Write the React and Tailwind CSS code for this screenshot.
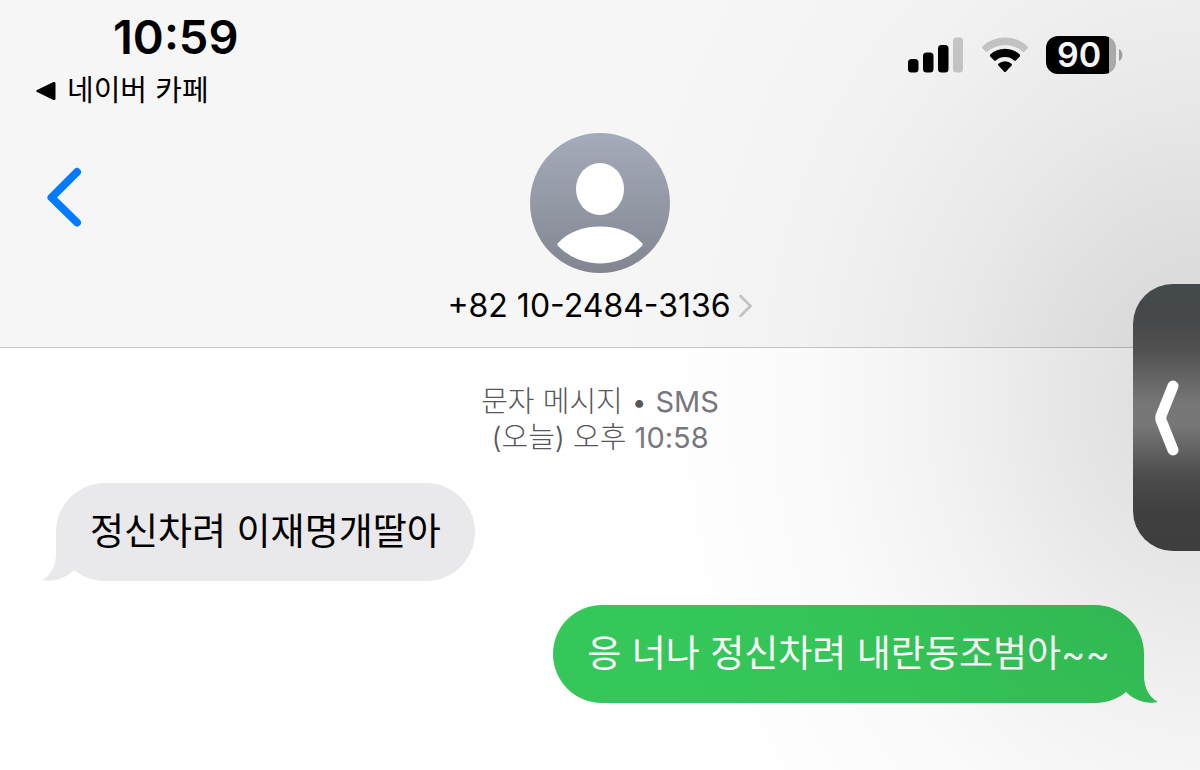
import { useId } from 'react';

const messages = [
  { id: 1, mine: false, text: '정신차려 이재명개딸아' },
  { id: 2, mine: true, text: '응 너나 정신차려 내란동조범아~~' }
];

const SignalIcon = () => (
  <svg width="56" height="36" viewBox="0 0 56 36" aria-hidden="true">
    <rect x="0" y="22" width="10.5" height="13.5" rx="3.5" />
    <rect x="15" y="15.5" width="10.5" height="20" rx="3.5" />
    <rect x="30" y="8" width="10.5" height="27.5" rx="3.5" />
    <rect x="45" y="0.5" width="10" height="35" rx="3.5" fill="#c8c8c8" />
  </svg>
);

const WifiIcon = () => (
  <svg width="48" height="36" viewBox="0 0 48 36" aria-hidden="true">
    <path
      d="M1.4 9.4 A33 33 0 0 1 46.6 9.4 Q47.2 10.4 46.6 11.2 L43 14.8 Q42.2 15.3 41.4 14.6 A26 26 0 0 0 6.6 14.6 Q5.8 15.3 5 14.8 L1.4 11.2 Q0.8 10.4 1.4 9.4 Z"
      fill="#c8c8c8"
    />
    <path d="M9.2 17.6 A21.5 21.5 0 0 1 38.8 17.6 Q39.5 18.6 38.8 19.6 L34.8 23.6 Q34 24.2 33.2 23.5 A14 14 0 0 0 14.8 23.5 Q14 24.2 13.2 23.6 L9.2 19.6 Q8.5 18.6 9.2 17.6 Z" />
    <path d="M17.4 26.8 A9.6 9.6 0 0 1 30.6 26.8 Q31.3 27.7 30.6 28.6 L24.8 34.8 Q24 35.6 23.2 34.8 L17.4 28.6 Q16.7 27.7 17.4 26.8 Z" />
  </svg>
);

const Battery = ({ level }) => (
  <div className="flex items-center gap-[3px]">
    <div className="flex h-[38px] w-[70px] items-center justify-center rounded-xl bg-linear-to-r from-black from-90% to-[#b0b0b0] to-90% pr-1 text-[34px] leading-none font-semibold text-white">
      {level}
    </div>
    <svg width="4" height="12" viewBox="0 0 4 12" aria-hidden="true">
      <path d="M0 0 C4.5 2 4.5 10 0 12 Z" fill="#a3a3a3" />
    </svg>
  </div>
);

const Avatar = () => {
  const gradientId = useId();

  return (
    <svg width="140" height="140" viewBox="0 0 140 140" aria-hidden="true">
      <defs>
        <linearGradient id={gradientId} x1="0" y1="0" x2="0" y2="1">
          <stop offset="0" stopColor="#a4abba" />
          <stop offset="1" stopColor="#838691" />
        </linearGradient>
      </defs>
      <circle cx="70" cy="70" r="70" fill={`url(#${gradientId})`} />
      <ellipse cx="70" cy="56" rx="24" ry="26" fill="#fff" />
      <path
        d="M28 110 C38 99 53 93.5 70 93.5 C87 93.5 102 99 112 110 Q113 111.5 112 113 C101 124 86 130.5 70 130.5 C54 130.5 39 124 28 113 Q27 111.5 28 110 Z"
        fill="#fff"
      />
    </svg>
  );
};

const Bubble = ({ mine, text }) => (
  <li className={mine ? 'flex justify-end' : 'flex justify-start'}>
    <div
      className={`relative rounded-[49px] px-[34px] py-5 text-[37px] leading-[58px] ${
        mine ? 'bg-[#35c759] text-white' : 'bg-[#e9e9eb] text-black'
      }`}
    >
      <svg
        width="50"
        height="50"
        viewBox="0 0 50 50"
        aria-hidden="true"
        className={
          mine
            ? 'absolute -right-[14px] bottom-0 -scale-x-100 text-[#35c759]'
            : 'absolute -left-[14px] bottom-0 text-[#e9e9eb]'
        }
      >
        <path
          d="M14 0 V22 C14 35 9 44 0 49 C12 51.500 24 47 32 39 L50 30 V0 Z"
          fill="currentColor"
        />
      </svg>
      <p className="relative">{text}</p>
    </div>
  </li>
);

const App = () => {
  return (
    <div className="relative min-h-screen overflow-hidden bg-white font-['Inter','Noto_Sans_CJK_KR',sans-serif] text-black">
      <header className="border-b border-[#c6c6c6] bg-[#f6f6f6] pb-5">
        <div className="flex justify-between pt-[10px] pr-[77px] pl-9">
          <div>
            <p className="pl-[77px] text-[47px] leading-[54px] font-semibold">10:59</p>
            <a href="#cafe" className="flex items-center gap-[11px] text-[29px] leading-[54px]">
              <svg width="20" height="20" viewBox="0 0 20 20" aria-hidden="true">
                <path d="M1 9 L17.5 1 Q19.5 0.5 19.5 2.5 V17.5 Q19.5 19.5 17.5 19 L1 11 Q-0.5 10 1 9 Z" />
              </svg>
              네이버 카페
            </a>
          </div>
          <div className="flex h-[90px] items-center gap-[17px]">
            <SignalIcon />
            <WifiIcon />
            <Battery level={90} />
          </div>
        </div>

        <div className="grid grid-cols-[1fr_auto_1fr] pt-[15px]">
          <button type="button" aria-label="Back" className="mt-[34px] ml-[46px] h-[60px] w-9">
            <svg width="36" height="60" viewBox="0 0 36 60" fill="none" aria-hidden="true">
              <path
                d="M31 5 L5.5 30.5 L31 55.5"
                stroke="#037aff"
                strokeWidth="8"
                strokeLinecap="round"
                strokeLinejoin="round"
              />
            </svg>
          </button>
          <button type="button" className="flex flex-col items-center gap-3">
            <Avatar />
            <span className="flex items-center gap-2 text-[32px] leading-[42px]">
              +82 10-2484-3136
              <svg width="14" height="24" viewBox="0 0 14 24" fill="none" aria-hidden="true">
                <path d="M1.5 2 L11.5 12 L1.5 22" stroke="#c3c3c5" strokeWidth="2.5" strokeLinecap="round" />
              </svg>
            </span>
          </button>
        </div>
      </header>

      <main className="px-14 pt-[36px] pb-16">
        <div className="text-center text-[29px] leading-9 font-light text-[#56565c]">
          <p>
            문자 메시지 • <span className="font-normal text-[#77777d]">SMS</span>
          </p>
          <p>
            (오늘) 오후 <span className="font-normal text-[#77777d]">10:58</span>
          </p>
        </div>
        <ul className="mt-[27px] flex flex-col gap-6">
          {messages.map((message) => (
            <Bubble key={message.id} mine={message.mine} text={message.text} />
          ))}
        </ul>
      </main>

      {/* soft shade cast by the side handle */}
      <div className="pointer-events-none absolute inset-0 bg-[radial-gradient(ellipse_620px_760px_at_100%_400px,rgba(0,0,0,0.14),rgba(0,0,0,0.09)_25%,rgba(0,0,0,0.055)_40%,rgba(0,0,0,0.02)_62%,rgba(0,0,0,0.005)_85%,transparent)]" />

      <button
        type="button"
        aria-label="Open side panel"
        className="absolute top-[284px] right-0 flex h-[267px] w-[67px] items-center justify-center rounded-l-[40px] bg-[linear-gradient(to_bottom,#434a4b,#474849_14%,#505050_24%,#777777_45%,#777777_53%,#4c4c4c_72%,#404040_85%,#3e3e3e)]"
      >
        <svg width="26" height="76" viewBox="0 0 26 76" fill="none" aria-hidden="true">
          <path
            d="M19 6 L7 36 Q6.5 38 7 40 L19 70"
            stroke="#fff"
            strokeWidth="11"
            strokeLinecap="round"
            strokeLinejoin="round"
          />
        </svg>
      </button>
    </div>
  );
};

export default App;
